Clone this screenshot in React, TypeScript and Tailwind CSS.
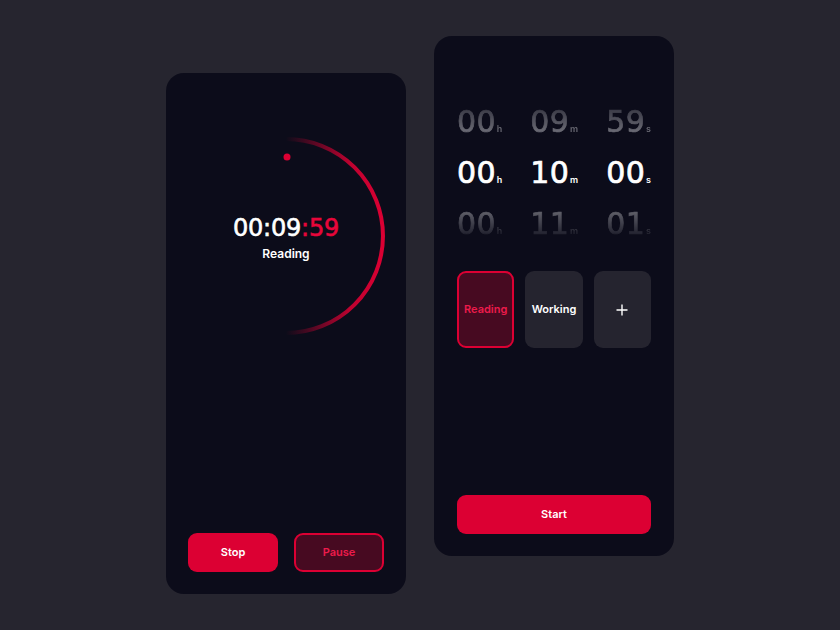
import type { ReactNode } from "react"

const RED = "#dc0033"

function TimerRing() {
  return (
    <svg width="240" height="240" viewBox="0 0 240 240" className="absolute inset-0">
      <defs>
        <linearGradient id="ring" x1="120" y1="0" x2="218" y2="0" gradientUnits="userSpaceOnUse">
          <stop offset="0" stopColor={RED} stopOpacity="0" />
          <stop offset="0.65" stopColor={RED} stopOpacity="0.85" />
          <stop offset="1" stopColor={RED} stopOpacity="1" />
        </linearGradient>
      </defs>
      <path d="M120 23 A97 97 0 0 1 120 217" fill="none" stroke="url(#ring)" strokeWidth="4" />
      <circle cx="121" cy="41" r="3.5" fill={RED} />
    </svg>
  )
}

function RunningCard() {
  return (
    <div className="mt-[37px] flex h-[521px] w-[240px] flex-col rounded-[18px] bg-[#0c0c1a] px-[22px] pb-[22px]">
      <div className="relative -mx-[22px] mt-[43px] h-[240px] w-[240px]">
        <TimerRing />
        <div className="absolute inset-x-0 top-[97px] flex flex-col items-center">
          <div className="font-['DejaVu_Sans',sans-serif] text-[24px] leading-[30px] tracking-[-0.2px] text-white [-webkit-text-stroke:0.6px_currentColor]">
            00:09<span className="text-[#e8063a]">:59</span>
          </div>
          <div className="mt-[2px] font-['Inter',sans-serif] text-[12px] font-semibold text-white">Reading</div>
        </div>
      </div>
      <div className="mt-auto grid grid-cols-2 gap-[16px]">
        <button className="h-[39px] rounded-[9px] bg-[#dc0033] font-['Inter',sans-serif] text-[11px] font-semibold text-white">
          Stop
        </button>
        <button className="h-[39px] rounded-[9px] border-2 border-[#dc0033] bg-[#470a21] font-['Inter',sans-serif] text-[11px] font-semibold text-[#ec1b4b]">
          Pause
        </button>
      </div>
    </div>
  )
}

type Tone = "top" | "mid" | "bottom"

// faded rows above and below the selected one
const toneClass: Record<Tone, string> = {
  top: "text-[#7a7a83] [mask-image:linear-gradient(to_bottom,rgba(0,0,0,0.35),#000)]",
  mid: "text-white",
  bottom: "text-[#6c6c75] [mask-image:linear-gradient(to_bottom,#000,rgba(0,0,0,0.05))]",
}

function Cell({ value, unit, tone }: { value: string; unit: string; tone: Tone }) {
  return (
    <div className={`flex items-end ${toneClass[tone]}`}>
      <span className="font-['DejaVu_Sans',sans-serif] text-[30px] leading-[34px] tracking-[0.3px] [-webkit-text-stroke:0.7px_currentColor]">
        {value}
      </span>
      <span className="mb-[6px] ml-[1px] font-['Inter',sans-serif] text-[9px] font-semibold leading-none">{unit}</span>
    </div>
  )
}

function PickerRow({ values, tone }: { values: [string, string, string]; tone: Tone }) {
  return (
    <div className="flex h-[51px] items-center justify-between">
      <Cell value={values[0]} unit="h" tone={tone} />
      <Cell value={values[1]} unit="m" tone={tone} />
      <Cell value={values[2]} unit="s" tone={tone} />
    </div>
  )
}

function Tag({ children, active }: { children: ReactNode; active?: boolean }) {
  return (
    <div
      className={
        active
          ? "flex h-[77px] items-center justify-center rounded-[9px] border-2 border-[#dc0033] bg-[#470a21] font-['Inter',sans-serif] text-[11px] font-semibold text-[#ec1b4b]"
          : "flex h-[77px] items-center justify-center rounded-[9px] bg-[#25242f] font-['Inter',sans-serif] text-[11px] font-semibold text-white"
      }
    >
      {children}
    </div>
  )
}

function SetupCard() {
  return (
    <div className="flex h-[520px] w-[240px] flex-col rounded-[18px] bg-[#0c0c1a] px-[23px] pb-[22px] pt-[60px]">
      <PickerRow values={["00", "09", "59"]} tone="top" />
      <PickerRow values={["00", "10", "00"]} tone="mid" />
      <PickerRow values={["00", "11", "01"]} tone="bottom" />
      <div className="mt-[22px] grid grid-cols-3 gap-[11px]">
        <Tag active>Reading</Tag>
        <Tag>Working</Tag>
        <Tag>
          <svg width="12" height="12" viewBox="0 0 12 12">
            <path d="M6 0.5V11.5M0.5 6H11.5" stroke="white" strokeWidth="1.4" />
          </svg>
        </Tag>
      </div>
      <button className="mt-auto h-[39px] rounded-[9px] bg-[#dc0033] font-['Inter',sans-serif] text-[11px] font-semibold text-white">
        Start
      </button>
    </div>
  )
}

export default function App() {
  return (
    <div className="flex h-[630px] w-[840px] items-start justify-center gap-[28px] bg-[#26252f] pt-[36px]">
      <RunningCard />
      <SetupCard />
    </div>
  )
}
